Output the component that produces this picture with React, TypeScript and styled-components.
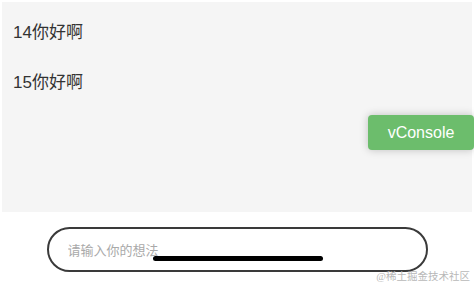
import styled, { createGlobalStyle } from "styled-components";

const GlobalStyle = createGlobalStyle`
    html, body {
        margin: 0;
        padding: 0;
        background: #ffffff;
    }
    body {
        font-family: "Liberation Sans", "Noto Sans CJK SC", sans-serif;
    }
`;

const messages = ["14你好啊", "15你好啊"];

export default function App() {
    return (
        <StyledPage>
            <GlobalStyle />
            <MessageList>
                {messages.map((m) => (
                    <MessageItem key={m}>{m}</MessageItem>
                ))}
            </MessageList>

            <InputBar>
                <ThoughtInput type="text" placeholder="请输入你的想法" />
            </InputBar>

            <VConsoleButton>vConsole</VConsoleButton>
            <HomeIndicator />
            <Watermark>@稀土掘金技术社区</Watermark>
        </StyledPage>
    );
}

const StyledPage = styled.div`
    position: relative;
    width: 474px;
    height: 289px;
    padding: 2px 2px 0;
    box-sizing: border-box;
    overflow: hidden;
    display: flex;
    flex-direction: column;
`;

const MessageList = styled.ul`
    margin: 0;
    padding: 6px 0 0 11px;
    list-style: none;
    height: 210px;
    box-sizing: border-box;
    background: #f5f5f5;
`;

const MessageItem = styled.li`
    height: 50px;
    line-height: 50px;
    font-size: 17px;
    color: #333;
`;

const InputBar = styled.div`
    display: flex;
    justify-content: center;
    padding-top: 15px;
`;

const ThoughtInput = styled.input`
    width: 381px;
    height: 45px;
    box-sizing: border-box;
    border: 2px solid #3a3a3a;
    border-radius: 23px;
    padding: 0 19px;
    font-size: 13px;
    font-family: "Noto Sans CJK SC", sans-serif;
    color: #333;
    background: #fff;
    outline: none;

    &::placeholder {
        color: #a9a9a9;
    }
`;

const VConsoleButton = styled.div`
    position: absolute;
    top: 115px;
    right: 0;
    width: 106px;
    height: 35px;
    border-radius: 4px;
    background: #6cbd6c;
    box-shadow: 0 0 8px rgba(0, 0, 0, 0.22);
    color: #fff;
    font-size: 16px;
    line-height: 35px;
    text-align: center;
`;

const HomeIndicator = styled.div`
    position: absolute;
    left: 153px;
    top: 256px;
    width: 170px;
    height: 5px;
    border-radius: 3px;
    background: #000;
`;

const Watermark = styled.div`
    position: absolute;
    right: 4px;
    bottom: 6px;
    font-family: "Liberation Serif", "Noto Sans CJK SC", serif;
    font-size: 10.5px;
    color: #b8b8b8;
`;
